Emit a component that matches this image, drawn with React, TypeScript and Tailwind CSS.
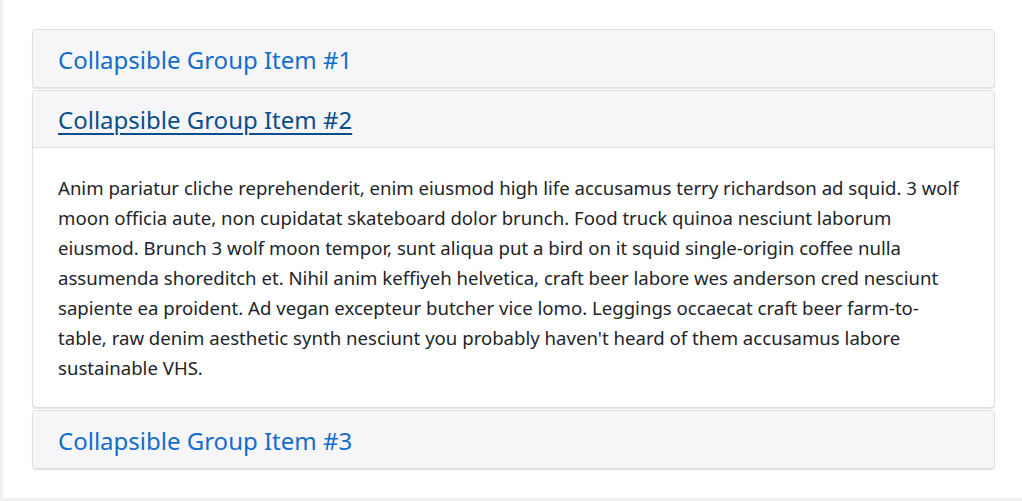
import React from "react";

const items = [
  { title: "Collapsible Group Item #1", open: false, hover: false },
  { title: "Collapsible Group Item #2", open: true, hover: true },
  { title: "Collapsible Group Item #3", open: false, hover: false },
];

const lines = [
  "Anim pariatur cliche reprehenderit, enim eiusmod high life accusamus terry richardson ad squid. 3 wolf",
  "moon officia aute, non cupidatat skateboard dolor brunch. Food truck quinoa nesciunt laborum",
  "eiusmod. Brunch 3 wolf moon tempor, sunt aliqua put a bird on it squid single-origin coffee nulla",
  "assumenda shoreditch et. Nihil anim keffiyeh helvetica, craft beer labore wes anderson cred nesciunt",
  "sapiente ea proident. Ad vegan excepteur butcher vice lomo. Leggings occaecat craft beer farm-to-",
  "table, raw denim aesthetic synth nesciunt you probably haven't heard of them accusamus labore",
  "sustainable VHS.",
];

export default function App() {
  return (
    <div
      className="w-[1022px] h-[501px] bg-[#f2f2f4] pl-[3px] pb-[3px]"
      style={{ fontFamily: '"Noto Sans", "Open Sans", sans-serif' }}
    >
      <div className="h-full bg-white pt-[29px] pl-[29px] pr-[27px]">
        <div className="flex flex-col gap-[2px]">
          {items.map((it) => (
            <div
              key={it.title}
              className="rounded-[4px] border border-[#dedfe2] shadow-[0_1px_1px_rgba(0,0,0,0.12)] bg-white overflow-hidden"
            >
              <div
                className={
                  "bg-[#f6f6f8] h-[57px] flex items-center pl-[25px] " +
                  (it.open ? "border-b border-[#dedfe2]" : "")
                }
              >
                <a
                  href="#"
                  className={
                    "text-[24px] leading-none pt-[2px] " +
                    (it.hover
                      ? "text-[#0b4e8c] underline underline-offset-[4px] decoration-[2px]"
                      : "text-[#136dcc] no-underline")
                  }
                >
                  {it.title}
                </a>
              </div>
              {it.open && (
                <div className="px-[25px] pt-[25px] pb-[24px] text-[18.6px] leading-[30px] text-[#212529]">
                  {lines.map((l) => (
                    <div key={l} className="whitespace-nowrap">
                      {l}
                    </div>
                  ))}
                </div>
              )}
            </div>
          ))}
        </div>
      </div>
    </div>
  );
}
